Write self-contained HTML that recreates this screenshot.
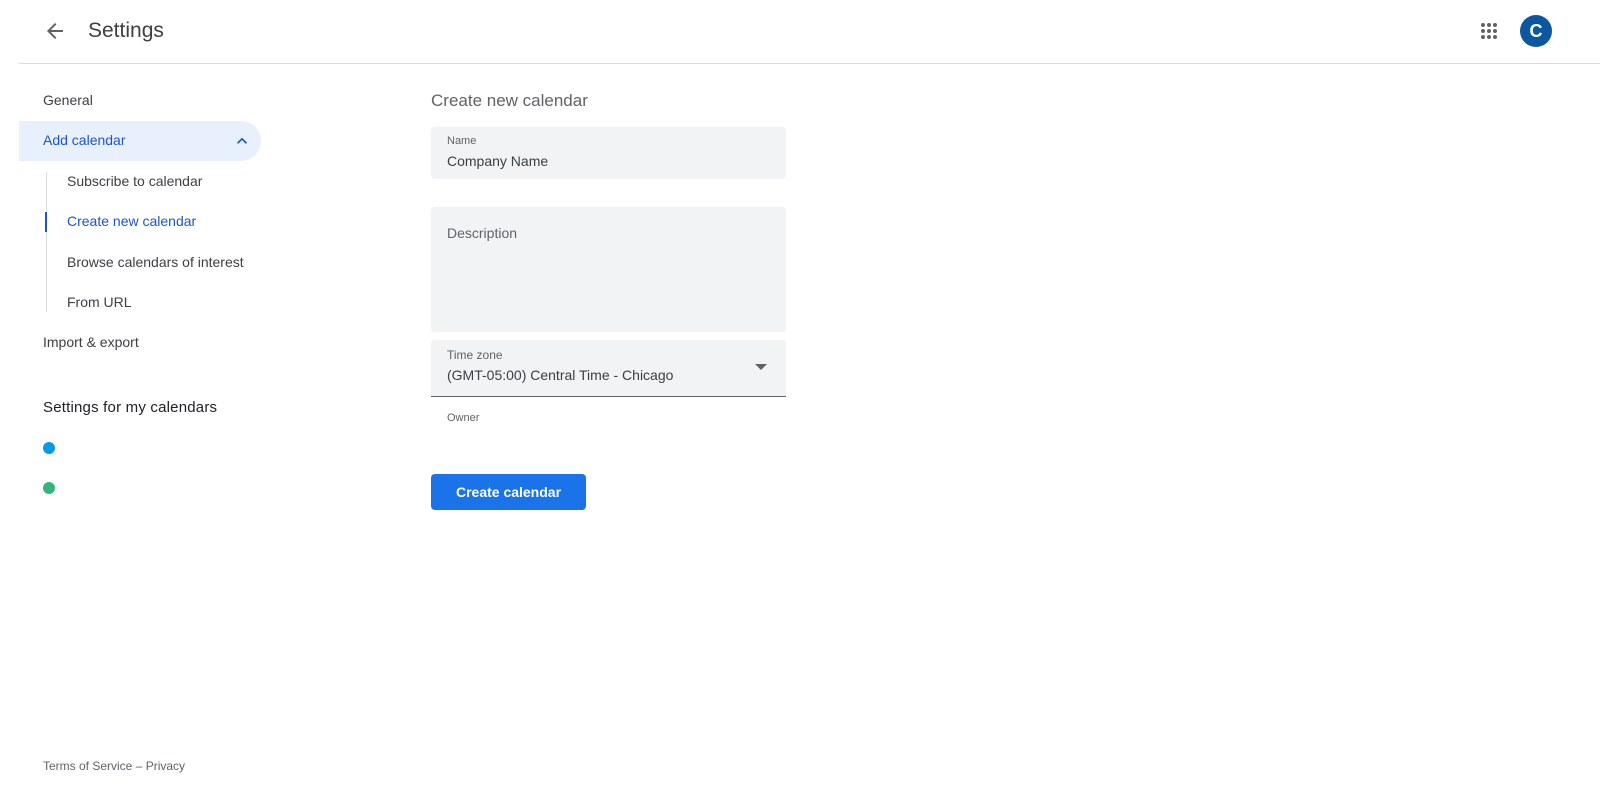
<!DOCTYPE html>
<html><head><meta charset="utf-8"><style>
*{box-sizing:border-box;margin:0;padding:0}
body{width:1600px;height:790px;background:#fff;font-family:"Liberation Sans",Arial,sans-serif;color:#3c4043;position:relative;overflow:hidden}
.a{position:absolute}
.nav{font-size:14px;color:#3c4043}
</style></head><body>
<svg class="a" style="left:43px;top:19px" width="24" height="24" viewBox="0 0 24 24"><path d="M20 11H7.83l5.59-5.59L12 4l-8 8 8 8 1.41-1.41L7.83 13H20v-2z" fill="#5f6368"/></svg>
<div class="a" style="left:88px;top:19px;font-size:21px;color:#3c4043">Settings</div>
<svg class="a" style="left:1477px;top:19px" width="24" height="24" viewBox="0 0 24 24" fill="#5f6368"><circle cx="6" cy="6" r="2"/><circle cx="12" cy="6" r="2"/><circle cx="18" cy="6" r="2"/><circle cx="6" cy="12" r="2"/><circle cx="12" cy="12" r="2"/><circle cx="18" cy="12" r="2"/><circle cx="6" cy="18" r="2"/><circle cx="12" cy="18" r="2"/><circle cx="18" cy="18" r="2"/></svg>
<div class="a" style="left:1520px;top:15px;width:32px;height:32px;border-radius:50%;background:#0b57a0;color:#fff;font-size:18px;font-weight:bold;text-align:center;line-height:32px">C</div>
<div class="a" style="left:19px;top:63px;width:1581px;height:1px;background:#dadce0"></div>

<div class="a nav" style="left:43px;top:92px">General</div>
<div class="a" style="left:19px;top:121px;width:242px;height:40px;background:#e8f0fe;border-radius:0 20px 20px 0"></div>
<div class="a nav" style="left:43px;top:132px;color:#1a56c8">Add calendar</div>
<svg class="a" style="left:232px;top:131px" width="20" height="20" viewBox="0 0 24 24"><path d="M7.41 15.41L12 10.83l4.59 4.58L18 14l-6-6-6 6z" fill="#1a56c8"/></svg>
<div class="a" style="left:46px;top:172px;width:1px;height:140px;background:#dadce0"></div>
<div class="a" style="left:45px;top:212px;width:2px;height:20px;background:#1a56c8"></div>
<div class="a nav" style="left:67px;top:173px">Subscribe to calendar</div>
<div class="a nav" style="left:67px;top:213px;color:#1a56c8">Create new calendar</div>
<div class="a nav" style="left:67px;top:254px">Browse calendars of interest</div>
<div class="a nav" style="left:67px;top:294px">From URL</div>
<div class="a nav" style="left:43px;top:334px">Import &amp; export</div>
<div class="a nav" style="left:43px;top:399px;color:#202124;font-size:15px;letter-spacing:0.2px">Settings for my calendars</div>
<div class="a" style="left:43px;top:442px;width:12px;height:12px;border-radius:50%;background:#039be5"></div>
<div class="a" style="left:43px;top:482px;width:12px;height:12px;border-radius:50%;background:#33b679"></div>
<div class="a" style="left:43px;top:759px;font-size:12px;color:#5f6368">Terms of Service – Privacy</div>

<div class="a" style="left:431px;top:91px;font-size:17px;color:#5f6368">Create new calendar</div>
<div class="a" style="left:431px;top:127px;width:355px;height:52px;background:#f1f3f4;border-radius:4px"></div>
<div class="a" style="left:447px;top:135px;font-size:11px;color:#5f6368">Name</div>
<div class="a" style="left:447px;top:153px;font-size:14px;color:#3c4043">Company Name</div>
<div class="a" style="left:431px;top:207px;width:355px;height:125px;background:#f1f3f4;border-radius:4px"></div>
<div class="a" style="left:447px;top:225px;font-size:14px;color:#5f6368">Description</div>
<div class="a" style="left:431px;top:340px;width:355px;height:57px;background:#f1f3f4;border-radius:4px 4px 0 0;border-bottom:1px solid #5f6368"></div>
<div class="a" style="left:447px;top:348px;font-size:12px;color:#5f6368">Time zone</div>
<div class="a" style="left:447px;top:367px;font-size:14px;color:#3c4043">(GMT-05:00) Central Time - Chicago</div>
<svg class="a" style="left:755px;top:363px" width="12" height="8" viewBox="0 0 10 5"><path d="M0 0l5 5 5-5z" fill="#5f6368"/></svg>
<div class="a" style="left:447px;top:412px;font-size:11px;color:#5f6368">Owner</div>
<div class="a" style="left:431px;top:474px;width:155px;height:36px;background:#1a73e8;border-radius:4px;color:#fff;font-size:14px;font-weight:bold;text-align:center;line-height:36px">Create calendar</div>
</body></html>
